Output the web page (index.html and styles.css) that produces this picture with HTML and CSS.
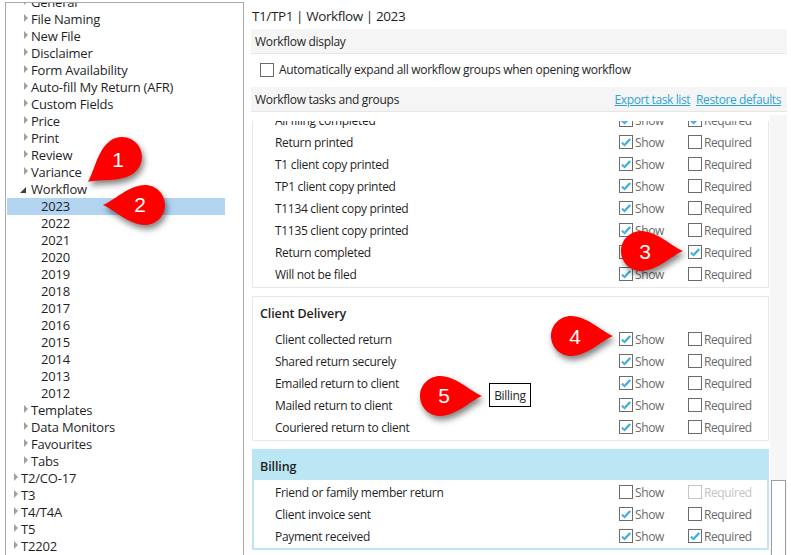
FILE: index.html
```html
<!DOCTYPE html>
<html lang="en">
<head>
<meta charset="utf-8">
<title>T1/TP1 Workflow 2023</title>
<link rel="stylesheet" href="styles.css">
</head>
<body>
<svg class="defs" width="0" height="0" aria-hidden="true">
  <symbol id="tick" viewBox="0 0 12 12">
    <path d="M2 6.6 L4.6 9 L10.2 3" fill="none" stroke="#3aaee2" stroke-width="2.3"/>
    <path d="M3 6.4 L4.6 7.8" fill="none" stroke="#b5e2f6" stroke-width="0.9"/>
  </symbol>
  <symbol id="drop" viewBox="0 0 62 40" overflow="visible">
    <path d="M62 20 C50 15 36 0 20 0 C9 0 0 9 0 20 C0 31 9 40 20 40 C36 40 50 25 62 20Z" fill="#fe0000"/>
  </symbol>
</svg>
<div class="page">
  <nav class="tree">
    <div class="tree-inner">
      <div class="node l2"><i class="arrow"></i>General</div>
      <div class="node l2"><i class="arrow"></i>File Naming</div>
      <div class="node l2"><i class="arrow"></i>New File</div>
      <div class="node l2"><i class="arrow"></i>Disclaimer</div>
      <div class="node l2"><i class="arrow"></i>Form Availability</div>
      <div class="node l2"><i class="arrow"></i>Auto-fill My Return (AFR)</div>
      <div class="node l2"><i class="arrow"></i>Custom Fields</div>
      <div class="node l2"><i class="arrow"></i>Price</div>
      <div class="node l2"><i class="arrow"></i>Print</div>
      <div class="node l2"><i class="arrow"></i>Review</div>
      <div class="node l2"><i class="arrow"></i>Variance</div>
      <div class="node l2"><i class="arrow open"></i>Workflow</div>
      <div class="node l3 selected">2023</div>
      <div class="node l3">2022</div>
      <div class="node l3">2021</div>
      <div class="node l3">2020</div>
      <div class="node l3">2019</div>
      <div class="node l3">2018</div>
      <div class="node l3">2017</div>
      <div class="node l3">2016</div>
      <div class="node l3">2015</div>
      <div class="node l3">2014</div>
      <div class="node l3">2013</div>
      <div class="node l3">2012</div>
      <div class="node l2"><i class="arrow"></i>Templates</div>
      <div class="node l2"><i class="arrow"></i>Data Monitors</div>
      <div class="node l2"><i class="arrow"></i>Favourites</div>
      <div class="node l2"><i class="arrow"></i>Tabs</div>
      <div class="node l1"><i class="arrow"></i>T2/CO-17</div>
      <div class="node l1"><i class="arrow"></i>T3</div>
      <div class="node l1"><i class="arrow"></i>T4/T4A</div>
      <div class="node l1"><i class="arrow"></i>T5</div>
      <div class="node l1"><i class="arrow"></i>T2202</div>
    </div>
  </nav>
  <main class="main">
    <h1 class="title">T1/TP1 | Workflow | 2023</h1>
    <div class="section-head">Workflow display</div>
    <label class="expand"><span class="cb"></span>Automatically expand all workflow groups when opening workflow</label>
    <div class="section-head tasks-head">
      <span>Workflow tasks and groups</span>
      <span class="links"><a href="#">Export task list</a><a href="#">Restore defaults</a></span>
    </div>
    <div class="scroller">
      <div class="list">
        <div class="list-inner">
          <section class="card first">
            <div class="row"><span>All filing completed</span><span class="opt"><span class="cb"><svg><use href="#tick"/></svg></span>Show</span><span class="opt"><span class="cb"><svg><use href="#tick"/></svg></span>Required</span></div>
            <div class="row"><span>Return printed</span><span class="opt"><span class="cb"><svg><use href="#tick"/></svg></span>Show</span><span class="opt"><span class="cb"></span>Required</span></div>
            <div class="row"><span>T1 client copy printed</span><span class="opt"><span class="cb"><svg><use href="#tick"/></svg></span>Show</span><span class="opt"><span class="cb"></span>Required</span></div>
            <div class="row"><span>TP1 client copy printed</span><span class="opt"><span class="cb"><svg><use href="#tick"/></svg></span>Show</span><span class="opt"><span class="cb"></span>Required</span></div>
            <div class="row"><span>T1134 client copy printed</span><span class="opt"><span class="cb"><svg><use href="#tick"/></svg></span>Show</span><span class="opt"><span class="cb"></span>Required</span></div>
            <div class="row"><span>T1135 client copy printed</span><span class="opt"><span class="cb"><svg><use href="#tick"/></svg></span>Show</span><span class="opt"><span class="cb"></span>Required</span></div>
            <div class="row"><span>Return completed</span><span class="opt"><span class="cb"><svg><use href="#tick"/></svg></span>Show</span><span class="opt"><span class="cb"><svg><use href="#tick"/></svg></span>Required</span></div>
            <div class="row"><span>Will not be filed</span><span class="opt"><span class="cb"><svg><use href="#tick"/></svg></span>Show</span><span class="opt"><span class="cb"></span>Required</span></div>
          </section>
          <section class="card">
            <h2 class="card-title">Client Delivery</h2>
            <div class="row"><span>Client collected return</span><span class="opt"><span class="cb"><svg><use href="#tick"/></svg></span>Show</span><span class="opt"><span class="cb"></span>Required</span></div>
            <div class="row"><span>Shared return securely</span><span class="opt"><span class="cb"><svg><use href="#tick"/></svg></span>Show</span><span class="opt"><span class="cb"></span>Required</span></div>
            <div class="row"><span>Emailed return to client</span><span class="opt"><span class="cb"><svg><use href="#tick"/></svg></span>Show</span><span class="opt"><span class="cb"></span>Required</span></div>
            <div class="row"><span>Mailed return to client</span><span class="opt"><span class="cb"><svg><use href="#tick"/></svg></span>Show</span><span class="opt"><span class="cb"></span>Required</span></div>
            <div class="row"><span>Couriered return to client</span><span class="opt"><span class="cb"><svg><use href="#tick"/></svg></span>Show</span><span class="opt"><span class="cb"></span>Required</span></div>
          </section>
          <section class="card billing">
            <h2 class="card-title">Billing</h2>
            <div class="row"><span>Friend or family member return</span><span class="opt"><span class="cb"></span>Show</span><span class="opt disabled"><span class="cb"></span>Required</span></div>
            <div class="row"><span>Client invoice sent</span><span class="opt"><span class="cb"><svg><use href="#tick"/></svg></span>Show</span><span class="opt"><span class="cb"></span>Required</span></div>
            <div class="row"><span>Payment received</span><span class="opt"><span class="cb"><svg><use href="#tick"/></svg></span>Show</span><span class="opt"><span class="cb"><svg><use href="#tick"/></svg></span>Required</span></div>
          </section>
        </div>
      </div>
      <div class="scrollbar"><div class="thumb"></div></div>
    </div>
  </main>
  <div class="tooltip">Billing</div>
  <div class="pin pin-1"><svg><use href="#drop" width="62" height="40"/></svg><span>1</span></div>
  <div class="pin pin-2"><svg><use href="#drop" width="62" height="40"/></svg><span>2</span></div>
  <div class="pin pin-3"><svg><use href="#drop" width="62" height="40"/></svg><span>3</span></div>
  <div class="pin pin-4"><svg><use href="#drop" width="62" height="40"/></svg><span>4</span></div>
  <div class="pin pin-5"><svg><use href="#drop" width="62" height="40"/></svg><span>5</span></div>
</div>
</body>
</html>
```
FILE: styles.css
```css
html, body { margin: 0; height: 100%; overflow: hidden; background: #fff; }
body { font-family: "Open Sans", "Noto Sans", "Liberation Sans", sans-serif; font-size: 12px; color: #1f1f1f; }
.defs { position: absolute; }
.page { position: relative; display: flex; width: 791px; height: 555px; overflow: hidden; padding: 2px 4px 0 5px; box-sizing: border-box; }

.tree { width: 239px; flex: none; box-sizing: border-box; height: 560px; border: 1px solid #a9a9a9; border-bottom: 0; padding: 0 1px; overflow: hidden; }
.tree-inner { margin-top: -9px; }
.node { height: 17px; line-height: 17px; position: relative; white-space: nowrap; font-size: 13px; letter-spacing: -0.2px; }
.l1 { padding-left: 14px; }
.l2 { padding-left: 24px; }
.l3 { padding-left: 34px; }
.selected { background: #b3d4f1; width: 218px; box-sizing: border-box; }
.arrow { position: absolute; top: 3px; width: 0; height: 0; border-style: solid; border-width: 4px 0 4px 4px; border-color: transparent transparent transparent #a0a0a0; }
.l1 .arrow { left: 7px; }
.l2 .arrow { left: 17px; }
.l2 .arrow.open { left: 13px; top: 6px; border-width: 0 0 6px 6px; border-color: transparent transparent #404040 transparent; }

.main { flex: 1; margin-left: 7px; min-width: 0; display: flex; flex-direction: column; }
.title { margin: 0; height: 27px; padding-left: 1px; font-size: 13.5px; font-weight: 400; line-height: 28px; letter-spacing: -0.4px; }
.section-head { height: 24px; line-height: 26px; background: #f5f5f5; border-bottom: 1px solid #e6e6e6; padding-left: 4px; letter-spacing: -0.3px; }
.expand { height: 33px; box-sizing: border-box; padding: 0 0 2px 9px; display: flex; align-items: center; gap: 5px; letter-spacing: -0.3px; }
.tasks-head { display: flex; justify-content: space-between; }
.links { display: flex; gap: 6px; padding-right: 6px; letter-spacing: -0.4px; }
.links a { color: #2ea3d6; text-decoration: underline; }

.scroller { flex: 1; display: flex; min-height: 0; padding-top: 1px; }
.list { width: 519px; margin: 8px 0 0 1px; height: 434px; overflow: hidden; }
.list-inner { margin-top: -13px; }
.card { border: 1px solid #e8e8e8; margin-bottom: 8px; padding-bottom: 2px; background: #fff; }
.card-title { margin: 0; height: 31px; line-height: 34px; padding-left: 7px; font-size: 12.5px; font-weight: 600; letter-spacing: -0.1px; }
.row { display: grid; grid-template-columns: 344px 69px 1fr; padding-left: 22px; height: 22px; align-items: center; letter-spacing: -0.3px; }
.opt { display: flex; align-items: center; gap: 2px; color: #6a6a6a; letter-spacing: -0.4px; }
.opt.disabled { color: #c4c4c4; }
.opt.disabled .cb { border-color: #c4c4c4; }
.cb { width: 14px; height: 14px; flex: none; box-sizing: border-box; border: 1px solid #6b6b6b; display: inline-block; background: #fff; }
.cb svg { display: block; width: 12px; height: 12px; }
.billing { border: 2px solid #bce6f3; border-top-width: 1px; margin-bottom: 0; padding-bottom: 1px; }
.billing .card-title { background: #bce6f3; height: 30px; line-height: 34px; padding-left: 6px; margin-bottom: 1px; }
.billing .row { padding-left: 21px; }

.scrollbar { width: 17px; background: #f6f6f6; height: 445px; position: relative; flex: none; margin: 2px 0 0 1px; }
.thumb { position: absolute; left: 1px; right: 1px; top: 365px; height: 90px; background: #fff; border: 1px solid #9e9e9e; box-sizing: border-box; }

.tooltip { position: absolute; left: 489px; top: 383px; width: 42px; height: 24px; box-sizing: border-box; border: 1px solid #000; background: #fff; line-height: 24px; text-align: center; color: #1f1f1f; letter-spacing: -0.3px; }

.pin { position: absolute; width: 62px; height: 40px; }
.pin svg { display: block; width: 62px; height: 40px; overflow: visible; filter: drop-shadow(2px 4px 3px rgba(0,0,0,.5)); }
.pin use { transform-box: view-box; }
.pin span { position: absolute; top: 8px; left: 9px; width: 30px; text-align: center; color: #fff; font: 400 21px/26px "Liberation Sans", sans-serif; }
.pin-1 { left: 102px; top: 137px; }
.pin-1 use { transform: rotate(144deg); transform-origin: 20px 20px; }
.pin-1 span { left: 1px; top: 10px; }
.pin-2 { left: 103px; top: 185px; }
.pin-2 use { transform: scaleX(-1); transform-origin: 31px 20px; }
.pin-2 span { left: 22px; top: 7px; }
.pin-3 { left: 621px; top: 231px; }
.pin-4 { left: 551px; top: 316px; }
.pin-5 { left: 420px; top: 376px; }
.pin-5 span { left: 9px; top: 7px; }
```
